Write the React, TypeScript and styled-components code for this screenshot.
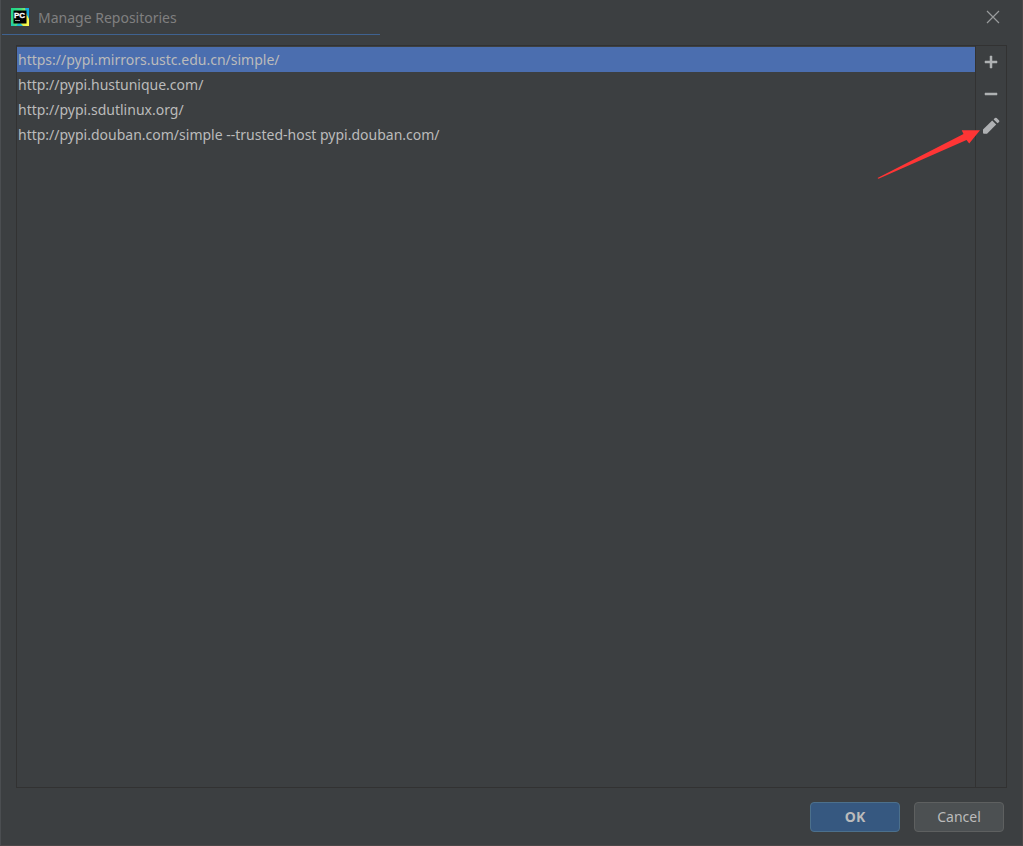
import React, { useState } from "react";
import styled, { createGlobalStyle } from "styled-components";

const GlobalStyle = createGlobalStyle`
  * { box-sizing: border-box; }
  body {
    margin: 0;
    background: #3c3f41;
    color: #bbbbbb;
    font-family: "Noto Sans", "Open Sans", sans-serif;
    font-size: 14px;
  }
  button { font: inherit; color: inherit; }
`;

const Dialog = styled.main`
  display: flex;
  flex-direction: column;
  min-height: 100vh;
  border-left: 1px solid #4b4e51;
  border-bottom: 1px solid #4b4748;
  border-right: 1px solid #4b4748;
`;

const TitleBar = styled.header`
  display: flex;
  align-items: center;
  height: 34px;
  padding: 0 19px 0 9px;
`;

const Title = styled.h1`
  flex: 1;
  margin: 0 0 0 8px;
  padding-top: 2px;
  font-size: 14px;
  line-height: 20px;
  font-weight: 400;
  color: #808080;
`;

const IconButton = styled.button`
  display: flex;
  align-items: center;
  justify-content: center;
  padding: 0;
  border: 0;
  background: transparent;
  cursor: pointer;
  svg { display: block; }
`;

const CloseButton = styled(IconButton)`
  width: 20px;
  height: 20px;
`;

const TitleRule = styled.hr`
  width: 37%;
  height: 1px;
  margin: 0 0 0 1px;
  border: 0;
  background: #3f6290;
`;

const Panel = styled.section`
  display: flex;
  flex: 1;
  margin: 10px 15px 0;
  border: 1px solid #323232;
`;

const RepositoryList = styled.ul`
  flex: 1;
  min-width: 0;
  margin: 0;
  padding: 1px 0 0;
  list-style: none;
`;

const Repository = styled.li<{ $selected: boolean }>`
  height: 25px;
  padding: 0 1px;
  line-height: 25px;
  white-space: nowrap;
  overflow: hidden;
  cursor: default;
  background: ${(p) => (p.$selected ? "#4b6eaf" : "transparent")};
`;

const Toolbar = styled.div`
  display: flex;
  flex-direction: column;
  width: 31px;
  border-left: 1px solid #323232;
`;

const ToolButton = styled(IconButton)`
  position: relative;
  height: 32px;
`;

const Arrow = styled.svg`
  position: absolute;
  top: 18px;
  right: 26px;
  pointer-events: none;
`;

const Footer = styled.footer`
  display: flex;
  justify-content: flex-end;
  gap: 14px;
  padding: 14px 18px 13px;
`;

const DialogButton = styled.button<{ $primary?: boolean }>`
  width: 90px;
  height: 30px;
  padding: 0;
  font-size: 14px;
  line-height: 28px;
  border: 1px solid ${(p) => (p.$primary ? "#4c708c" : "#5e6060")};
  border-radius: 4px;
  background: ${(p) => (p.$primary ? "#365880" : "#4c5052")};
  font-weight: ${(p) => (p.$primary ? 700 : 400)};
`;

const Logo = () => (
  <svg width="20" height="20" viewBox="0 0 20 20" role="img" aria-label="PyCharm">
    <defs>
      <linearGradient id="logo" x1="0" y1="0.3" x2="1" y2="0.7">
        <stop offset="0" stopColor="#21d789" />
        <stop offset="0.4" stopColor="#3fdc80" />
        <stop offset="0.75" stopColor="#d8ee4c" />
        <stop offset="1" stopColor="#fcf84a" />
      </linearGradient>
    </defs>
    <path d="M1 1H19V19H1Z" fill="url(#logo)" />
    <path d="M15 1H19V12L16 6Z" fill="#12a9dc" />
    <path d="M1 15L5 19H1Z" fill="#20c9b0" />
    <path d="M6 19L9 15L13 19Z" fill="#18b7d0" />
    <rect x="3.500" y="3.500" width="13" height="13" fill="#000" />
    <text x="4" y="10.500" fontFamily="Liberation Sans, sans-serif" fontSize="8" fontWeight="700" fill="#fff" stroke="#fff" strokeWidth="0.3">PC</text>
    <rect x="5" y="13" width="5" height="1" fill="#999" />
  </svg>
);

const repositories = [
  "https://pypi.mirrors.ustc.edu.cn/simple/",
  "http://pypi.hustunique.com/",
  "http://pypi.sdutlinux.org/",
  "http://pypi.douban.com/simple --trusted-host pypi.douban.com/",
];

export default function App() {
  const [selected, setSelected] = useState(0);
  return (
    <>
      <GlobalStyle />
      <Dialog role="dialog" aria-labelledby="dialog-title">
        <TitleBar>
          <Logo />
          <Title id="dialog-title">Manage Repositories</Title>
          <CloseButton aria-label="Close">
            <svg width="14" height="14" viewBox="0 0 14 14" stroke="#999b9c" strokeWidth="1.2">
              <path d="M1 1L13 13M13 1L1 13" />
            </svg>
          </CloseButton>
        </TitleBar>
        <TitleRule />
        <Panel>
          <RepositoryList role="listbox" aria-label="Repositories">
            {repositories.map((url, i) => (
              <Repository
                key={url}
                role="option"
                aria-selected={i === selected}
                $selected={i === selected}
                onClick={() => setSelected(i)}
              >
                {url}
              </Repository>
            ))}
          </RepositoryList>
          <Toolbar role="toolbar" aria-label="Repository actions">
            <ToolButton aria-label="Add">
              <svg width="14" height="14" viewBox="0 0 14 14" fill="#afb1b3">
                <path d="M6 1H8V6H13V8H8V13H6V8H1V6H6Z" stroke="#afb1b3" strokeWidth="0.5" />
              </svg>
            </ToolButton>
            <ToolButton aria-label="Remove">
              <svg width="14" height="14" viewBox="0 0 14 14" fill="#afb1b3">
                <path d="M1 6H13V8H1Z" stroke="#afb1b3" strokeWidth="0.5" />
              </svg>
            </ToolButton>
            <ToolButton aria-label="Edit">
              <svg width="18" height="18" viewBox="0 0 18 18" fill="#afb1b3">
                <path d="M1 12.500L10.200 3.600L14.200 7.500L5 16.700H2Q1 16.700 1 15.700Z" />
                <path d="M11.600 2.400L12.900 1.100Q13.800 0.500 14.700 1.100L17.100 3.500Q17.700 4.300 17.100 5L15.500 6.300Z" />
              </svg>
              <Arrow width="104" height="52" viewBox="0 0 104 52" aria-hidden="true">
                <path d="M1.500 50L87.500 6L85.700 2.300L104 2.300L93.200 15.500L90.500 12L2.500 50.800Z" fill="#ff3535" />
              </Arrow>
            </ToolButton>
          </Toolbar>
        </Panel>
        <Footer>
          <DialogButton $primary>OK</DialogButton>
          <DialogButton>Cancel</DialogButton>
        </Footer>
      </Dialog>
    </>
  );
}
